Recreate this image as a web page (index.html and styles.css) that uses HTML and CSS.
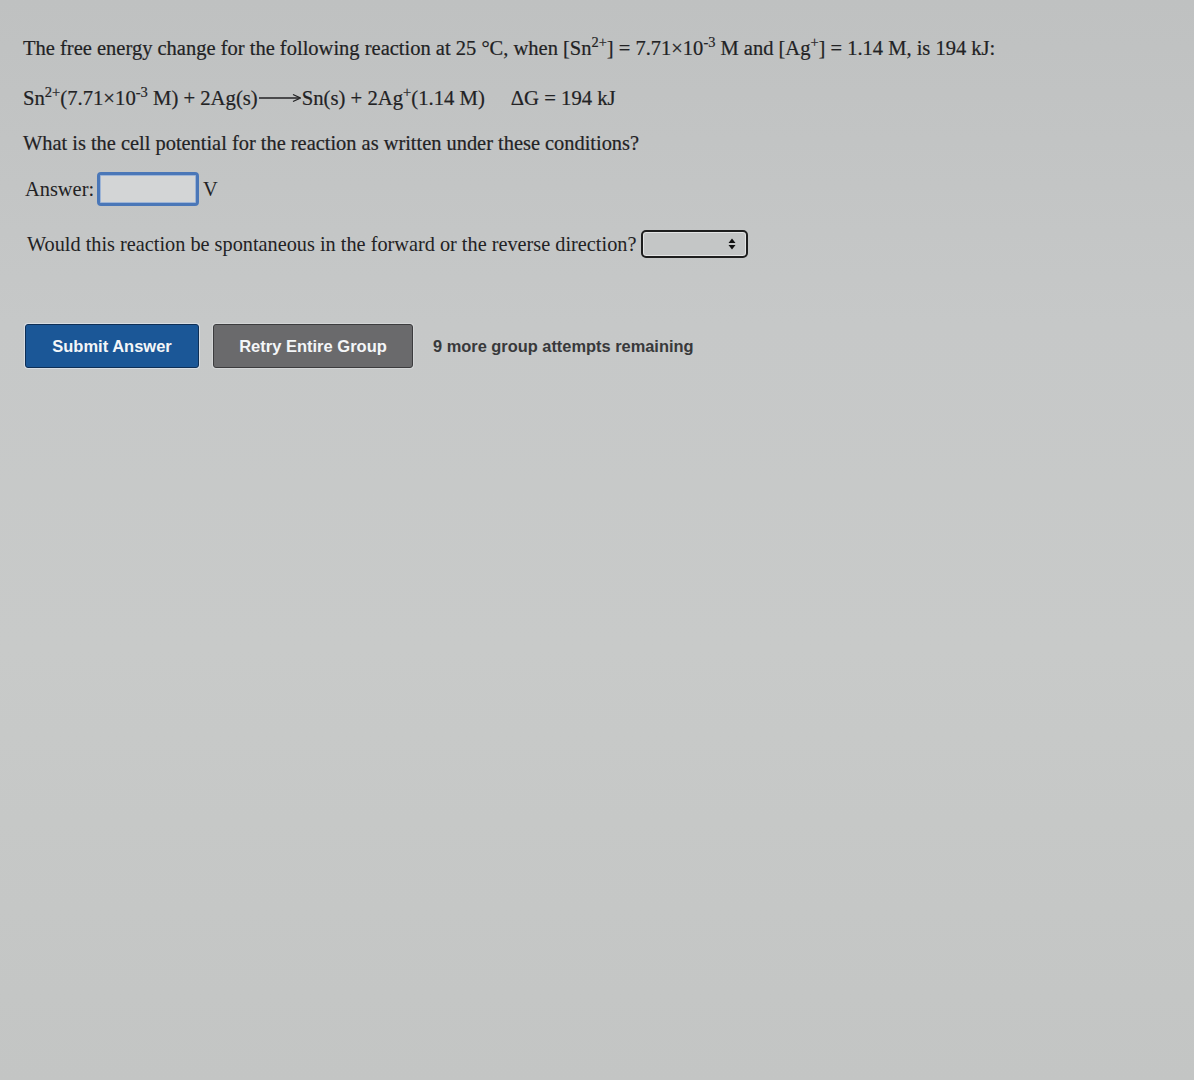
FILE: index.html
```html
<!DOCTYPE html>
<html>
<head>
<meta charset="utf-8">
<link rel="stylesheet" href="styles.css">
</head>
<body>
<div class="page">
  <p class="line l1">The free energy change for the following reaction at 25 °C, when [Sn<sup>2+</sup>] = 7.71×10<sup>-3</sup> M and [Ag<sup>+</sup>] = 1.14 M, is 194 kJ:</p>
  <p class="line l2">Sn<sup>2+</sup>(7.71×10<sup>-3</sup> M) + 2Ag(s)<svg class="arrow" width="42" height="10" viewBox="0 0 42 10"><path d="M0 5 H40" stroke="#222224" stroke-width="1.3"/><path d="M34 1.5 L41.5 5 L34 8.5" fill="none" stroke="#222224" stroke-width="1.3"/></svg>Sn(s) + 2Ag<sup>+</sup>(1.14 M)<span class="dg">ΔG = 194 kJ</span></p>
  <p class="line l3">What is the cell potential for the reaction as written under these conditions?</p>
  <div class="answer-row">
    <span>Answer:</span>
    <span class="input"></span>
    <span class="unit">V</span>
  </div>
  <div class="dir-row">
    <span>Would this reaction be spontaneous in the forward or the reverse direction?</span>
    <span class="select">
      <svg class="updown" width="8" height="12" viewBox="0 0 8 12"><path d="M4 0.5 L7.5 5 H0.5 Z M4 11.5 L7.5 7 H0.5 Z" fill="#111"/></svg>
    </span>
  </div>
  <div class="actions">
    <button class="btn submit">Submit Answer</button>
    <button class="btn retry">Retry Entire Group</button>
    <span class="remaining">9 more group attempts remaining</span>
  </div>
</div>
</body>
</html>
```
FILE: styles.css
```css
html, body {
  margin: 0;
  padding: 0;
}
body {
  width: 1194px;
  height: 1080px;
  background: linear-gradient(180deg, #bfc1c1 0%, #c6c8c8 30%, #c8cac9 60%, #c3c5c4 100%);
  font-family: "Liberation Serif", "Times New Roman", serif;
  color: #222224;
}
.page {
  padding: 34px 0 0 23px;
}
.line {
  margin: 0;
  font-size: 20.5px;
  line-height: 28px;
  white-space: nowrap;
  -webkit-text-stroke: 0.2px #222224;
}
sup {
  font-size: 0.7em;
  line-height: 0;
  vertical-align: 0.55em;
}
.l2 {
  margin-top: 22px;
  font-size: 20.7px;
}
.arrow {
  display: inline-block;
  vertical-align: 0.08em;
  margin: 0 1px 0 1px;
}
.dg {
  margin-left: 26px;
}
.l3 {
  margin-top: 17px;
  font-size: 20.4px;
}
.answer-row {
  display: flex;
  align-items: center;
  margin-top: 15px;
  margin-left: 2px;
  font-size: 20.4px;
  height: 34px;
}
.input {
  width: 96px;
  height: 28px;
  margin-left: 3px;
  border: 3px solid #4a77b8;
  border-radius: 4px;
  background: #d3d5d6;
  box-shadow: inset 0 0 0 1px #9db4d6;
}
.unit {
  margin-left: 4px;
}
.dir-row {
  display: flex;
  align-items: center;
  margin-top: 23px;
  margin-left: 4px;
  font-size: 20.3px;
  height: 30px;
}
.select {
  position: relative;
  width: 103px;
  height: 24px;
  margin-left: 5px;
  border: 2px solid #1e1e1e;
  border-radius: 5px;
  background: #c4c6c6;
  box-shadow: inset 0 0 0 1px #e3e4e4;
  display: flex;
  align-items: center;
  justify-content: flex-end;
}
.updown {
  margin-right: 10px;
}
.actions {
  display: flex;
  align-items: center;
  margin-top: 65px;
  margin-left: 2px;
}
.btn {
  font-family: "Liberation Sans", Arial, sans-serif;
  font-weight: bold;
  font-size: 16.5px;
  color: #f4f6f8;
  height: 44px;
  border-radius: 3px;
  padding: 0;
  cursor: pointer;
}
.submit {
  width: 174px;
  background: #1b5797;
  border: 1px solid #0f2f55;
  box-shadow: 0 0 0 1px #d8dde3;
}
.retry {
  width: 200px;
  margin-left: 14px;
  background: #6a6a6c;
  border: 1px solid #3c3c3e;
  box-shadow: 0 0 0 1px #d3d5d6;
}
.remaining {
  margin-left: 20px;
  font-family: "Liberation Sans", Arial, sans-serif;
  font-weight: bold;
  font-size: 16.4px;
  color: #38393b;
}
```
